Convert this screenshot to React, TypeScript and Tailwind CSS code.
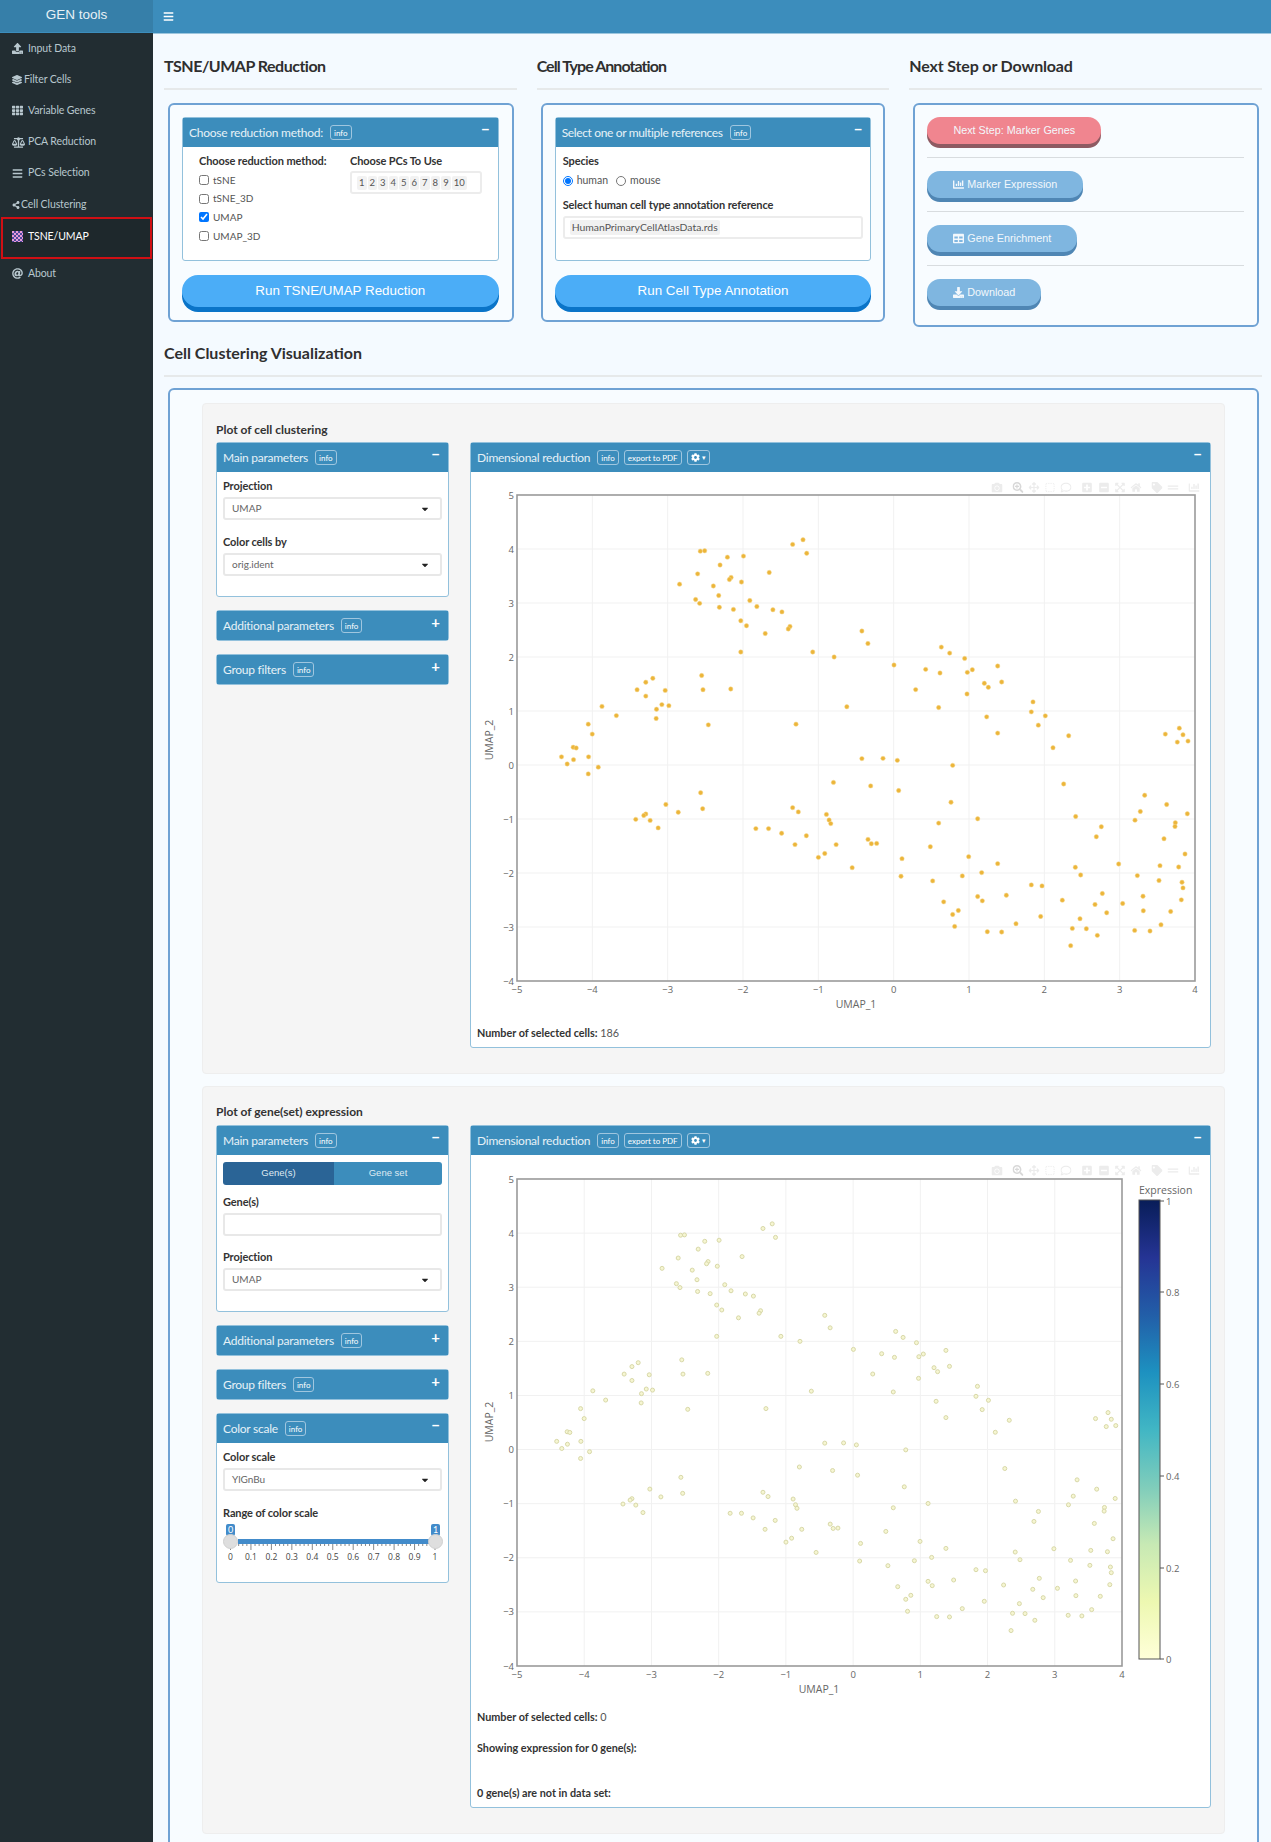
import type { ReactNode } from 'react';
import {
  FaUpload, FaLayerGroup, FaTh, FaBalanceScale, FaBars, FaShareAlt, FaAt, FaChartBar, FaTable, FaDownload, FaCog,
  FaCamera, FaSearchPlus, FaArrowsAlt, FaRegComment, FaPlusSquare, FaMinusSquare, FaExpandArrowsAlt, FaHome, FaTag, FaGripLines, FaCaretDown,
} from 'react-icons/fa';
import { SquareDashed } from 'lucide-react';

// points read off the plot, in two crops of the reference
const leftPts = [
  [690,201],[703,200],[771,218],[819,215],[749,240],[682,265],[896,261],[782,275],[777,281],[813,288],[628,294],[729,299],[745,326],[676,337],[688,348],[838,340],[747,359],[859,357],[789,365],[907,366],[934,372],[811,397],[828,411],[958,413],[953,420],[884,433],[811,485],[1026,485],[1090,499],[1173,426],[1191,461],[966,182],[997,169],[1008,207],
  [694,551],[548,559],[527,570],[501,591],[585,593],[698,591],[781,589],[527,609],[575,633],[596,636],[559,646],[396,638],[439,664],[558,672],[355,688],[714,690],[976,688],[1128,639],[367,716],[310,753],[319,755],[275,780],[356,780],[311,788],[292,800],[385,809],[355,828],[1173,785],
  [1088,852],[691,881],[587,914],[697,926],[527,941],[521,945],[497,956],[540,959],[624,936],[564,980],[966,923],[983,935],[1067,942],[1075,958],[1080,968],[856,982],[894,982],[933,995],[1007,1002],[973,1027],[1096,1027],[1062,1052],[1043,1063],[1144,1092],
];
const rightPts = [
  [273,85],[298,103],[343,119],[131,139],[442,142],[226,152],[366,153],[351,161],[269,163],[454,190],[402,194],[414,206],[196,213],[350,226],[265,267],[548,250],[543,280],[585,292],[409,295],[564,320],[442,344],[655,352],[608,388],[987,329],[945,347],[998,349],[981,371],[1013,368],
  [98,420],[141,426],[307,441],[61,503],[145,517],[640,497],[883,531],[302,552],[949,559],[870,580],[676,595],[1011,587],[382,602],[854,606],[265,615],[975,614],[974,625],[753,626],[738,656],[53,664],[63,677],[79,676],[941,662],[240,686],[1004,708],[155,722],[355,716],[442,737],[805,738],[675,748],[929,743],[985,747],[394,764],[152,775],[336,774],[691,771],[861,773],[247,789],[926,788],[543,801],[575,804],[995,793],[998,810],[756,827],[382,836],[878,835],[468,832],[396,849],[636,847],[993,846],[280,852],[734,860],[817,857],[324,878],[769,885],[879,879],[961,881],[307,890],[571,896],[689,903],[497,918],[932,921],[313,926],[666,932],[708,933],[853,938],[899,940],[411,942],[454,943],[741,953],[661,984],
];
const cells = [
  ...leftPts.map(([x, y]) => [-5 + (x - 142) / 225.2, (803 - y) / 152]),
  ...rightPts.map(([x, y]) => [(x - 130) / 226, (440 - y) / 162.6]),
];

const font = 'font-["Lato","Noto_Sans",sans-serif]';
const fmt = (n: number) => String(n).replace('-', '−');

function InfoBtn({ children, gap = 'ml-[5px]' }: { children: ReactNode; gap?: string }) {
  return (
    <span className={`inline-flex h-[15px] items-center rounded-[3px] border border-[#9fc6df] px-[3px] text-[8px] leading-none text-white ${gap}`}>
      {children}
    </span>
  );
}

function Panel({ title, open = true, extra, children, titleClass = 'tracking-[-0.25px]' }: {
  title: string; open?: boolean; extra?: ReactNode; children?: ReactNode; titleClass?: string;
}) {
  return (
    <div className="rounded-[3px] border border-[#93c1dc] bg-white">
      <div className="flex h-[29px] items-center bg-[#3c8dbc] pl-[6px] pr-[8px] text-white">
        <span className={`text-[12px] leading-none text-[#e6f1f7] ${titleClass}`}>{title}</span>
        <InfoBtn gap="ml-[7px]">info</InfoBtn>
        {extra}
        <span className="ml-auto -mt-[6px] text-[15px] font-bold leading-none">{open ? '−' : '+'}</span>
      </div>
      {children}
    </div>
  );
}

function Label({ children, className = '' }: { children: ReactNode; className?: string }) {
  return <div className={`h-[14px] text-[11px] font-bold leading-[14px] tracking-[-0.1px] text-[#333] ${className}`}>{children}</div>;
}

function Field({ label, children, className }: { label: string; children: ReactNode; className?: string }) {
  return (
    <div className={className}>
      <Label className="mb-[4px]">{label}</Label>
      {children}
    </div>
  );
}

function SelectBox({ value }: { value: string }) {
  return (
    <div className="flex h-[23px] items-center justify-between rounded-[3px] border-2 border-[#e8e8e8] bg-white pl-[7px] pr-[10px] text-[10px] text-[#666]">
      {value}
      <FaCaretDown size={10} color="#222" />
    </div>
  );
}

function Title({ children, className = '' }: { children: ReactNode; className?: string }) {
  return (
    <div className="border-b-2 border-[#e6e9ea] pb-[11px]">
      <h2 className={`h-[22px] text-[16px] font-bold leading-[22px] text-[#2f2f2f] ${className}`}>{children}</h2>
    </div>
  );
}

function RunBtn({ children }: { children: ReactNode }) {
  return (
    <div className='mt-[14px] flex h-[32px] items-center justify-center rounded-[17px] bg-[#4badf7] font-["Liberation_Sans",Arial,sans-serif] text-[13.4px] text-white shadow-[0_5px_0_#0a74c8]'>
      {children}
    </div>
  );
}

function StepBtn({ className, children }: { className: string; children: ReactNode }) {
  return (
    <div className={`flex h-[27px] items-center justify-center gap-[3px] rounded-[13px] font-["Liberation_Sans",Arial,sans-serif] text-[10.8px] text-[#f3f8fc] ${className}`}>
      {children}
    </div>
  );
}

const modebar = [
  { c: 997, I: FaCamera },
  { c: 1018, I: FaSearchPlus, dark: true },
  { c: 1034, I: FaArrowsAlt },
  { c: 1050, I: SquareDashed },
  { c: 1066, I: FaRegComment },
  { c: 1087, I: FaPlusSquare },
  { c: 1104, I: FaMinusSquare },
  { c: 1120, I: FaExpandArrowsAlt },
  { c: 1136, I: FaHome },
  { c: 1157, I: FaTag },
  { c: 1173, I: FaGripLines },
  { c: 1194, I: FaChartBar },
];

function Chart({ left, right, top, bottom, height, xLabelX, yLabelY, hollow, legend }: {
  left: number; right: number; top: number; bottom: number; height: number; xLabelX: number; yLabelY: number; hollow?: boolean; legend?: boolean;
}) {
  const sx = (v: number) => left + ((v + 5) / 9) * (right - left);
  const sy = (v: number) => top + ((5 - v) / 9) * (bottom - top);
  const xs = [-5, -4, -3, -2, -1, 0, 1, 2, 3, 4];
  const ys = [5, 4, 3, 2, 1, 0, -1, -2, -3, -4];
  const stops = ['#ffffd9', '#edf8b1', '#c7e9b4', '#7fcdbb', '#41b6c4', '#1d91c0', '#225ea8', '#253494', '#081d58'];
  const labelFont = '"Open Sans",sans-serif';
  return (
    <svg width="740" height={height} viewBox={`0 0 740 ${height}`} className="block">
      <defs>
        <linearGradient id="ylgnbu" x1="0" y1="1" x2="0" y2="0">
          {stops.map((s, i) => <stop key={s} offset={i / 8} stopColor={s} />)}
        </linearGradient>
      </defs>
      {xs.slice(1, -1).map((v) => <line key={v} x1={sx(v)} x2={sx(v)} y1={top} y2={bottom} stroke="#f1f1f1" />)}
      {ys.slice(1, -1).map((v) => <line key={v} y1={sy(v)} y2={sy(v)} x1={left} x2={right} stroke="#f1f1f1" />)}
      <rect x={left} y={top} width={right - left} height={bottom - top} fill="none" stroke="#9a9a9a" strokeWidth="1.6" />
      {cells.map(([x, y], i) => (
        <circle key={i} cx={sx(x)} cy={sy(y)} r={hollow ? 2 : 2.2} fill={hollow ? '#f6f6d2' : '#ecb53a'} stroke={hollow ? '#d8d8a8' : '#f4d891'} strokeWidth={hollow ? 1 : 0.5} />
      ))}
      {xs.map((v) => (
        <text key={v} x={sx(v)} y={bottom + 12} textAnchor="middle" fontSize="9.5" fill="#666" fontFamily={labelFont}>{fmt(v)}</text>
      ))}
      {ys.map((v) => (
        <text key={v} x={left - 3} y={sy(v) + 3.5} textAnchor="end" fontSize="9.5" fill="#666" fontFamily={labelFont}>{fmt(v)}</text>
      ))}
      <text x={xLabelX} y={bottom + 27} textAnchor="middle" fontSize="10.5" fill="#666" fontFamily={labelFont}>UMAP_1</text>
      <text transform={`translate(22 ${yLabelY}) rotate(-90)`} textAnchor="middle" fontSize="10.5" fill="#666" fontFamily={labelFont}>UMAP_2</text>
      {modebar.map(({ c, I, dark }) => (
        <I key={c} x={c - 471 - 5.5} y={10} width={11} height={11} size={11} color={dark ? '#d8d8d8' : '#ececec'} />
      ))}
      {legend && (
        <g>
          <text x="668" y="39" fontSize="10.5" fill="#666" fontFamily={labelFont}>Expression</text>
          <rect x="668" y="45" width="21" height="459" fill="url(#ylgnbu)" stroke="#555" strokeWidth="1" />
          {[[1, 46], [0.8, 137], [0.6, 229], [0.4, 321], [0.2, 413], [0, 504]].map(([v, y]) => (
            <g key={v}>
              <line x1="689" x2="693" y1={y} y2={y} stroke="#555" />
              <text x="695" y={y + 3.5} fontSize="9.5" fill="#666" fontFamily={labelFont}>{v}</text>
            </g>
          ))}
        </g>
      )}
    </svg>
  );
}

function Slider() {
  const majors = [0, 0.1, 0.2, 0.3, 0.4, 0.5, 0.6, 0.7, 0.8, 0.9, 1];
  return (
    <div className="relative h-[44px]">
      <span className="absolute left-[3px] top-0 flex h-[12px] w-[9px] items-center justify-center rounded-[2px] bg-[#428bca] text-[9px] text-white">0</span>
      <span className="absolute left-[208px] top-0 flex h-[12px] w-[9px] items-center justify-center rounded-[2px] bg-[#428bca] text-[9px] text-white">1</span>
      <div className="absolute left-[15px] top-[15px] h-[5px] w-[191px] bg-[#428bca]" />
      <div className="absolute left-0 top-[10px] h-[15px] w-[15px] rounded-full border border-[#d0d0d0] bg-[#dedede]" />
      <div className="absolute left-[205px] top-[10px] h-[15px] w-[15px] rounded-full border border-[#d0d0d0] bg-[#dedede]" />
      <svg width="220" height="44" className="block">
        {Array.from({ length: 51 }, (_, i) => (
          <line key={i} x1={7.5 + i * 4.09} x2={7.5 + i * 4.09} y1="20" y2={i % 5 === 0 ? 26 : 22} stroke="#555" strokeWidth="0.7" />
        ))}
        {majors.map((v, i) => (
          <text key={v} x={7.5 + i * 20.45} y="36" textAnchor="middle" fontSize="8.5" fill="#444" fontFamily='"Open Sans",sans-serif'>{v}</text>
        ))}
      </svg>
    </div>
  );
}

const navItems = [
  { label: 'Input Data', icon: <FaUpload size={11} />, gap: 'gap-[5px]' },
  { label: 'Filter Cells', icon: <FaLayerGroup size={10} />, gap: 'gap-[2px]' },
  { label: 'Variable Genes', icon: <FaTh size={11} />, gap: 'gap-[5px]' },
  { label: 'PCA Reduction', icon: <FaBalanceScale size={13} />, gap: 'gap-[3px]' },
  { label: 'PCs Selection', icon: <FaBars size={11} />, gap: 'gap-[5px]' },
  { label: 'Cell Clustering', icon: <FaShareAlt size={8} />, gap: 'gap-[1px]' },
];

function CheckerIcon() {
  return (
    <svg width="11" height="11" viewBox="0 0 11 11" shapeRendering="crispEdges">
      {Array.from({ length: 36 }, (_, i) => {
        const x = i % 6;
        const y = Math.floor(i / 6);
        return <rect key={i} x={x * 2} y={y * 2} width="2" height="2" fill={(x + y) % 2 === 0 ? '#e99ad8' : '#4f4a9e'} />;
      })}
    </svg>
  );
}

function Check({ label, checked }: { label: string; checked?: boolean }) {
  return (
    <label className="flex h-[18.6px] items-center gap-[4px] text-[10px] text-[#555]">
      <input type="checkbox" defaultChecked={checked} className="m-0 h-[10px] w-[10px]" />
      {label}
    </label>
  );
}

function DimPanel({ children }: { children: ReactNode }) {
  return (
    <Panel
      title="Dimensional reduction"
      extra={<>
        <InfoBtn>export to PDF</InfoBtn>
        <InfoBtn><FaCog size={9} /><span className="ml-[2px] text-[7px]">▾</span></InfoBtn>
      </>}
    >
      {children}
    </Panel>
  );
}

export default function App() {
  return (
    <div className={`h-[1842px] overflow-hidden bg-[#f4faff] ${font}`}>
      <header className="flex h-[34px] border-b border-[#9cc6de] bg-[#3c8dbc] text-white">
        <div className='flex h-[32px] w-[153px] items-center justify-center bg-[#367fa9] pb-[1px] font-["Liberation_Sans",Arial,sans-serif] text-[13.5px] text-[#e8f1f6]'>
          GEN tools
        </div>
        <div className="flex items-center pl-[10px] pb-[1px]"><FaBars size={11} /></div>
      </header>

      <div className="flex h-[1808px]">
        <aside className="-mt-[1px] w-[153px] shrink-0 bg-[#222d32] text-[10.5px] tracking-[-0.1px] text-[#b8c7ce]">
          {navItems.map((n) => (
            <div key={n.label} className={`flex h-[31.2px] items-center pl-[12px] ${n.gap}`}>
              {n.icon}
              {n.label}
            </div>
          ))}
          <div className="mx-[1px] -mt-[3.5px] flex h-[42px] items-center gap-[5px] border-2 border-[#d00f14] bg-[#1e282c] pb-[2px] pl-[9px] text-white">
            <CheckerIcon />
            TSNE/UMAP
          </div>
          <div className="flex h-[30px] items-center gap-[5px] pl-[12px]">
            <FaAt size={11} />
            About
          </div>
        </aside>

        <main className="min-w-0 flex-1 pl-[11px] pr-[9px] pt-[21px]">
          <div className="grid grid-cols-3 items-start gap-[20px]">
            <section>
              <Title className="tracking-[-0.5px]">TSNE/UMAP Reduction</Title>
              <div className="ml-[4px] mr-[3px] mt-[13px] rounded-[6px] border-2 border-[#6fa2d4] bg-white/40 pb-[13px] pl-[12px] pr-[13px] pt-[12px]">
                <Panel title="Choose reduction method:">
                  <div className="flex h-[113px] pl-[16px] pt-[7px]">
                    <div className="w-[151px]">
                      <Label className="mb-[3px]">Choose reduction method:</Label>
                      <Check label="tSNE" />
                      <Check label="tSNE_3D" />
                      <Check label="UMAP" checked />
                      <Check label="UMAP_3D" />
                    </div>
                    <div>
                      <Label className="mb-[3px]">Choose PCs To Use</Label>
                      <div className="flex h-[23px] w-[132px] items-center gap-[1px] rounded-[3px] border-2 border-[#ececec] pl-[5px]">
                        {[1, 2, 3, 4, 5, 6, 7, 8, 9, 10].map((n) => (
                          <span key={n} className="rounded-[2px] bg-[#f2f2f2] px-[2px] text-[9.5px] leading-[14px] text-[#555]">{n}</span>
                        ))}
                      </div>
                    </div>
                  </div>
                </Panel>
                <RunBtn>Run TSNE/UMAP Reduction</RunBtn>
              </div>
            </section>

            <section>
              <Title className="tracking-[-0.95px]">Cell Type Annotation</Title>
              <div className="mx-[4px] mt-[13px] rounded-[6px] border-2 border-[#6fa2d4] bg-white/40 px-[12px] pb-[13px] pt-[12px]">
                <Panel title="Select one or multiple references" titleClass="tracking-[-0.35px]">
                  <div className="h-[113px] px-[7px] pt-[7px]">
                    <Label>Species</Label>
                    <div className="mt-[4px] flex h-[18px] items-center text-[10.5px] text-[#555]">
                      <input type="radio" name="species" defaultChecked className="m-0 mr-[4px] h-[10px] w-[10px]" />
                      human
                      <input type="radio" name="species" className="m-0 ml-[8px] mr-[4px] h-[10px] w-[10px]" />
                      mouse
                    </div>
                    <Label className="mt-[8px]">Select human cell type annotation reference</Label>
                    <div className="mt-[4px] flex h-[23px] items-center rounded-[3px] border-2 border-[#ececec] pl-[5px]">
                      <span className="rounded-[2px] bg-[#f1f1f1] px-[2px] text-[10.4px] leading-[15px] text-[#555]">HumanPrimaryCellAtlasData.rds</span>
                    </div>
                  </div>
                </Panel>
                <RunBtn>Run Cell Type Annotation</RunBtn>
              </div>
            </section>

            <section>
              <Title className="tracking-[-0.15px]">Next Step or Download</Title>
              <div className="ml-[4px] mr-[3px] mt-[13px] rounded-[6px] border-2 border-[#6fa2d4] bg-white/40 pb-[19px] pl-[12px] pr-[13px] pt-[12px]">
                <StepBtn className="w-[174px] bg-[#f0858f] shadow-[0_4px_0_#8e5a62]">Next Step: Marker Genes</StepBtn>
                <div className="my-[13px] h-px bg-[#d8dcdf]" />
                <StepBtn className="w-[156px] bg-[#7fb6e0] shadow-[0_4px_0_#4f86b4]"><FaChartBar size={11} />Marker Expression</StepBtn>
                <div className="my-[13px] h-px bg-[#d8dcdf]" />
                <StepBtn className="w-[150px] bg-[#7fb6e0] shadow-[0_4px_0_#4f86b4]"><FaTable size={11} />Gene Enrichment</StepBtn>
                <div className="my-[13px] h-px bg-[#d8dcdf]" />
                <StepBtn className="w-[114px] bg-[#7fb6e0] shadow-[0_4px_0_#4f86b4]"><FaDownload size={11} />Download</StepBtn>
              </div>
            </section>
          </div>

          <div className="mt-[15px]">
            <Title>Cell Clustering Visualization</Title>
            <div className="ml-[4px] mr-[3px] mt-[11px] rounded-[6px] border-2 border-[#6fa2d4] bg-white/40 px-[32px] pt-[13px] pb-[20px]">
              <div className="rounded-[4px] border border-[#eeeeee] bg-[#f5f5f5] px-[13px] pb-[25px] pt-[19px]">
                <div className="mb-[5px] h-[14px] text-[12px] font-bold leading-[14px] text-[#333]">Plot of cell clustering</div>
                <div className="flex items-start gap-[21px]">
                  <div className="flex w-[233px] shrink-0 flex-col gap-[13px]">
                    <Panel title="Main parameters">
                      <div className="px-[6px] pb-[20px] pt-[7px]">
                        <Field label="Projection"><SelectBox value="UMAP" /></Field>
                        <Field label="Color cells by" className="mt-[15px]"><SelectBox value="orig.ident" /></Field>
                      </div>
                    </Panel>
                    <Panel title="Additional parameters" open={false} />
                    <Panel title="Group filters" open={false} />
                  </div>
                  <div className="min-w-0 flex-1">
                    <DimPanel>
                      <Chart left={46} right={724} top={23} bottom={509} height={549} xLabelX={385} yLabelY={268} />
                      <div className="mt-[5px] px-[6px] pb-[7px] text-[10.8px] leading-[14px] text-[#555]">
                        <b className="text-[#333]">Number of selected cells:</b> 186
                      </div>
                    </DimPanel>
                  </div>
                </div>
              </div>

              <div className="mt-[12px] rounded-[4px] border border-[#eeeeee] bg-[#f5f5f5] px-[13px] pb-[25px] pt-[18px]">
                <div className="mb-[6px] h-[14px] text-[12px] font-bold leading-[14px] text-[#333]">Plot of gene(set) expression</div>
                <div className="flex items-start gap-[21px]">
                  <div className="flex w-[233px] shrink-0 flex-col gap-[13px]">
                    <Panel title="Main parameters">
                      <div className="px-[6px] pb-[20px] pt-[7px]">
                        <div className='flex h-[23px] overflow-hidden rounded-[3px] font-["Liberation_Sans",Arial,sans-serif] text-[9.5px] text-[#dfeaf2]'>
                          <div className="flex w-[111px] items-center justify-center bg-[#2a6496]">Gene(s)</div>
                          <div className="flex flex-1 items-center justify-center bg-[#3c8dbc]">Gene set</div>
                        </div>
                        <Field label="Gene(s)" className="mt-[10px]">
                          <div className="h-[23px] rounded-[3px] border-2 border-[#e8e8e8]" />
                        </Field>
                        <Field label="Projection" className="mt-[14px]"><SelectBox value="UMAP" /></Field>
                      </div>
                    </Panel>
                    <Panel title="Additional parameters" open={false} />
                    <Panel title="Group filters" open={false} />
                    <Panel title="Color scale">
                      <div className="px-[6px] pt-[7px]">
                        <Field label="Color scale"><SelectBox value="YlGnBu" /></Field>
                        <Label className="mb-[4px] mt-[15px]">Range of color scale</Label>
                        <Slider />
                        <div className="h-[14px]" />
                      </div>
                    </Panel>
                  </div>
                  <div className="min-w-0 flex-1">
                    <DimPanel>
                      <Chart left={46} right={651} top={24} bottom={511} height={553} xLabelX={348} yLabelY={267} hollow legend />
                      <div className="mt-[2px] px-[6px] pb-[7px] text-[10.8px] leading-[14px] text-[#555]">
                        <div><b className="text-[#333]">Number of selected cells:</b> 0</div>
                        <div className="mt-[17px] font-bold text-[#333]">Showing expression for 0 gene(s):</div>
                        <div className="mt-[31px] font-bold text-[#333]">0 gene(s) are not in data set:</div>
                      </div>
                    </DimPanel>
                  </div>
                </div>
              </div>
            </div>
          </div>
        </main>
      </div>
    </div>
  );
}
